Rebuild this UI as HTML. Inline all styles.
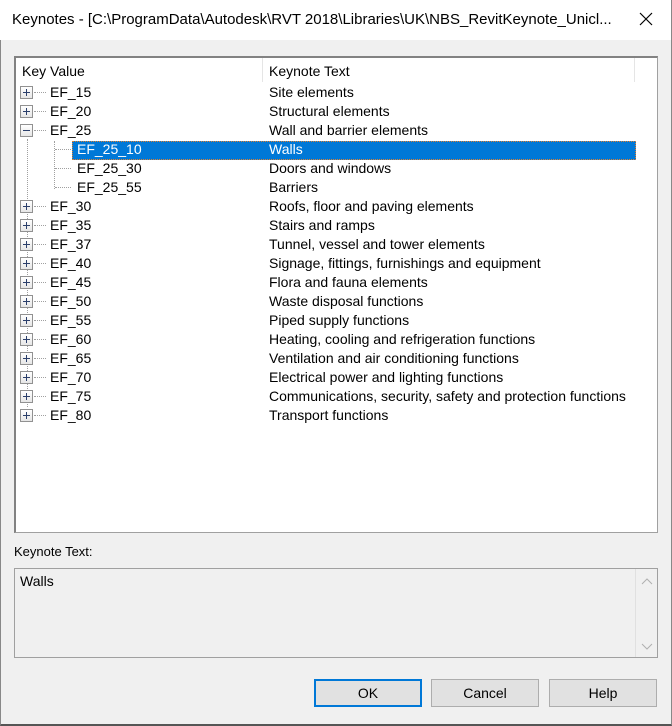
<!DOCTYPE html>
<html><head><style>
*{margin:0;padding:0;box-sizing:border-box}
body{width:672px;height:726px;background:#f0f0f0;font-family:"Liberation Sans",sans-serif;position:relative;overflow:hidden;color:#000}
.win{position:absolute;left:0;top:0;width:672px;height:726px;border:1px solid #888;border-top:none;border-bottom:2px solid #555}
.title{position:absolute;left:0;top:0;width:671px;height:40px;background:#fff;font-size:15px;line-height:40px;padding-left:12px;white-space:nowrap}
.close{position:absolute;left:637px;top:10px}
.tree{position:absolute;left:14px;top:56px;width:644px;height:477px;background:#fff;border:1px solid #a0a0a0;border-top:2px solid #828282;border-left:2px solid #828282}
.hdr{position:absolute;top:0;height:26px;font-size:14px;line-height:26px}
.hsep{position:absolute;top:0;width:1px;height:24px;background:#e5e5e5}
.row{position:absolute;height:19px;font-size:14px;line-height:19px;white-space:nowrap}
.box{position:absolute;width:13px;height:13px;border:1px solid #919191;background:linear-gradient(#fff,#e6e6e6)}
.box i{position:absolute;left:2px;top:5px;width:7px;height:1px;background:#2b3f6b}
.box b{position:absolute;left:5px;top:2px;width:1px;height:7px;background:#2b3f6b}
.hd{position:absolute;height:1px;border-top:1px dotted #a0a0a0}
.vd{position:absolute;width:1px;border-left:1px dotted #a0a0a0}
.sel{position:absolute;left:56px;top:83px;width:564px;height:19px;background:#0078d7;border:1px dotted #e08030}
.lbl{position:absolute;left:14px;top:544px;font-size:13px}
.txt{position:absolute;left:14px;top:568px;width:644px;height:90px;border:1px solid #a0a0a0;background:#f0f0f0;font-size:14px;padding:4px 5px}
.sb{position:absolute;right:0;top:0;width:22px;height:88px;border-left:1px solid #e0e0e0}
.btn{position:absolute;top:679px;height:28px;width:108px;border:1px solid #adadad;background:#e1e1e1;font-size:14px;text-align:center;line-height:26px}
</style></head><body>
<div class="win"></div>
<div class="title">Keynotes - [C:\ProgramData\Autodesk\RVT 2018\Libraries\UK\NBS_RevitKeynote_Unicl...</div>
<svg class="close" width="18" height="18"><path d="M3 3L15 15M15 3L3 15" stroke="#000" stroke-width="1.2"/></svg>
<div class="tree">
<div class="hdr" style="left:6px">Key Value</div>
<div class="hsep" style="left:246px"></div>
<div class="hdr" style="left:253px">Keynote Text</div>
<div class="hsep" style="left:618px"></div>
<div class="sel"></div>
<div class="vd" style="left:11px;top:81px;height:268px"></div>
<div class="vd" style="left:38px;top:83px;height:48px"></div>
<div id="rows"></div>
</div>
<div class="lbl">Keynote Text:</div>
<div class="txt">Walls<div class="sb"><svg width="22" height="88"><path d="M6 15l5-5 5 5M6 75l5 5 5-5" stroke="#b0b0b0" fill="none"/></svg></div></div>
<div class="btn" style="left:314px;border:2px solid #0078d7;line-height:24px">OK</div>
<div class="btn" style="left:431px">Cancel</div>
<div class="btn" style="left:549px">Help</div>
<script>
var d=[["EF_15","Site elements",0,1],["EF_20","Structural elements",0,1],["EF_25","Wall and barrier elements",0,2],["EF_25_10","Walls",1],["EF_25_30","Doors and windows",1],["EF_25_55","Barriers",1],["EF_30","Roofs, floor and paving elements",0,1],["EF_35","Stairs and ramps",0,1],["EF_37","Tunnel, vessel and tower elements",0,1],["EF_40","Signage, fittings, furnishings and equipment",0,1],["EF_45","Flora and fauna elements",0,1],["EF_50","Waste disposal functions",0,1],["EF_55","Piped supply functions",0,1],["EF_60","Heating, cooling and refrigeration functions",0,1],["EF_65","Ventilation and air conditioning functions",0,1],["EF_70","Electrical power and lighting functions",0,1],["EF_75","Communications, security, safety and protection functions",0,1],["EF_80","Transport functions",0,1]];
var h="";d.forEach(function(r,i){var t=25+i*19;var s=i==3?"color:#fff;":"";
if(r[2]==0){h+='<div class="box" style="left:4px;top:'+(t+3)+'px"><i></i>'+(r[3]==1?'<b></b>':'')+'</div><div class="hd" style="left:18px;top:'+(t+9)+'px;width:12px"></div><div class="row" style="left:34px;top:'+t+'px">'+r[0]+'</div>';}
else{h+='<div class="hd" style="left:39px;top:'+(t+9)+'px;width:16px"></div><div class="row" style="left:61px;top:'+t+'px;'+s+'">'+r[0]+'</div>';}
h+='<div class="row" style="left:253px;top:'+t+'px;'+s+'">'+r[1]+'</div>';});
document.getElementById("rows").innerHTML=h;
</script>
</body></html>
